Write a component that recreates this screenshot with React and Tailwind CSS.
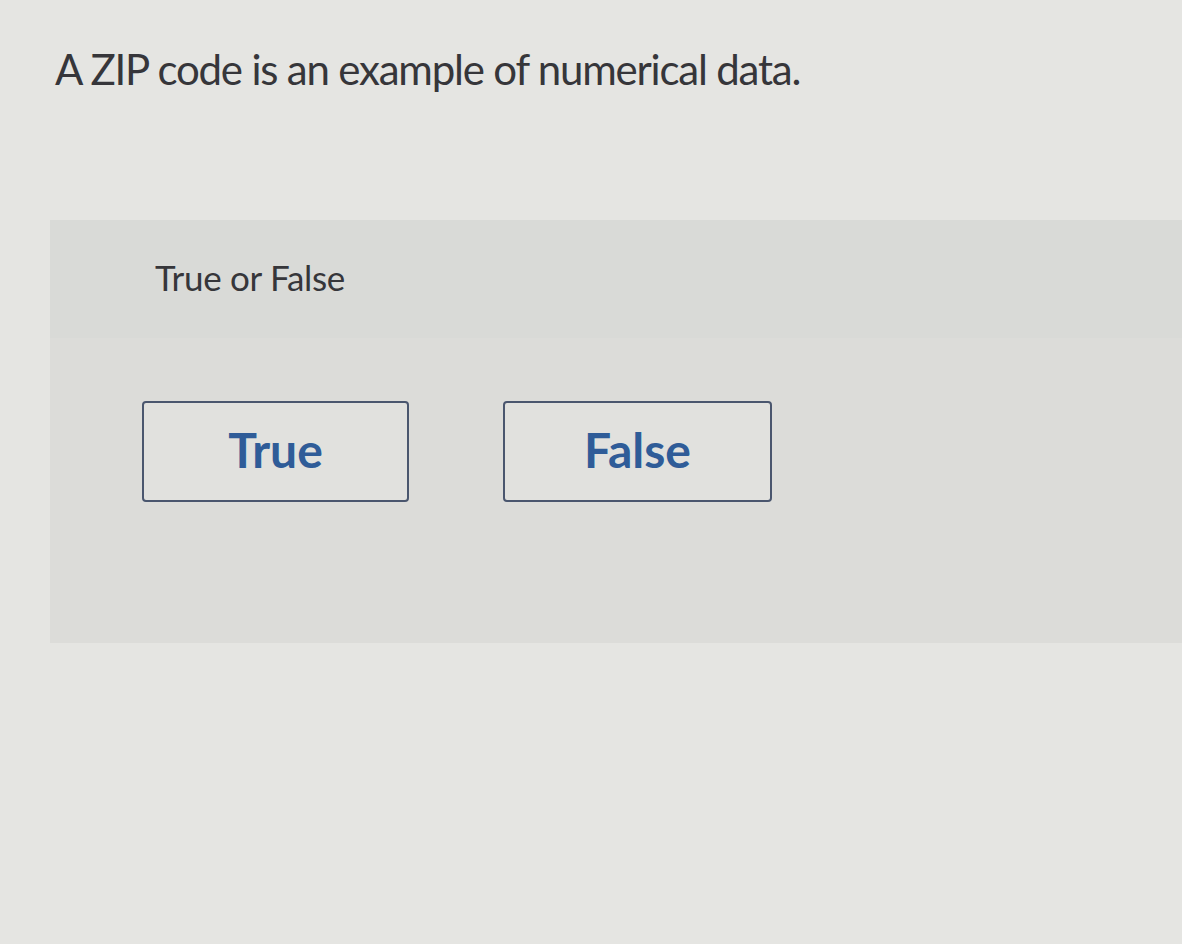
export default function App() {
  return (
    <div className="min-h-[944px] w-full bg-[#e5e5e2] font-['Lato','Liberation_Sans',sans-serif] text-[#36363a]">
      {/* Question */}
      <div className="pl-[55px] pt-[41px]">
        <h1 className="text-[42px] leading-[56px] font-normal tracking-[-1.2px]">
          A ZIP code is an example of numerical data.
        </h1>
      </div>

      {/* Answer panel */}
      <div className="ml-[50px] mt-[123px] w-[1132px]">
        <div className="h-[118px] bg-[#d9dad7] pl-[105px] pt-[35px]">
          <p className="text-[35px] leading-[44px] tracking-[-0.3px]">True or False</p>
        </div>
        <div className="h-[305px] bg-[#dcdcd9] pl-[92px] pt-[63px]">
          <div className="flex gap-[94px]">
            <button className="w-[267px] h-[101px] rounded-[4px] border-2 border-[#4a566e] bg-[#e1e1de] text-[#2f5c98] text-[48px] leading-none font-bold pb-[4px]">
              True
            </button>
            <button className="w-[269px] h-[101px] rounded-[4px] border-2 border-[#4a566e] bg-[#e1e1de] text-[#2f5c98] text-[48px] leading-none font-bold pb-[4px]">
              False
            </button>
          </div>
        </div>
      </div>
    </div>
  );
}
